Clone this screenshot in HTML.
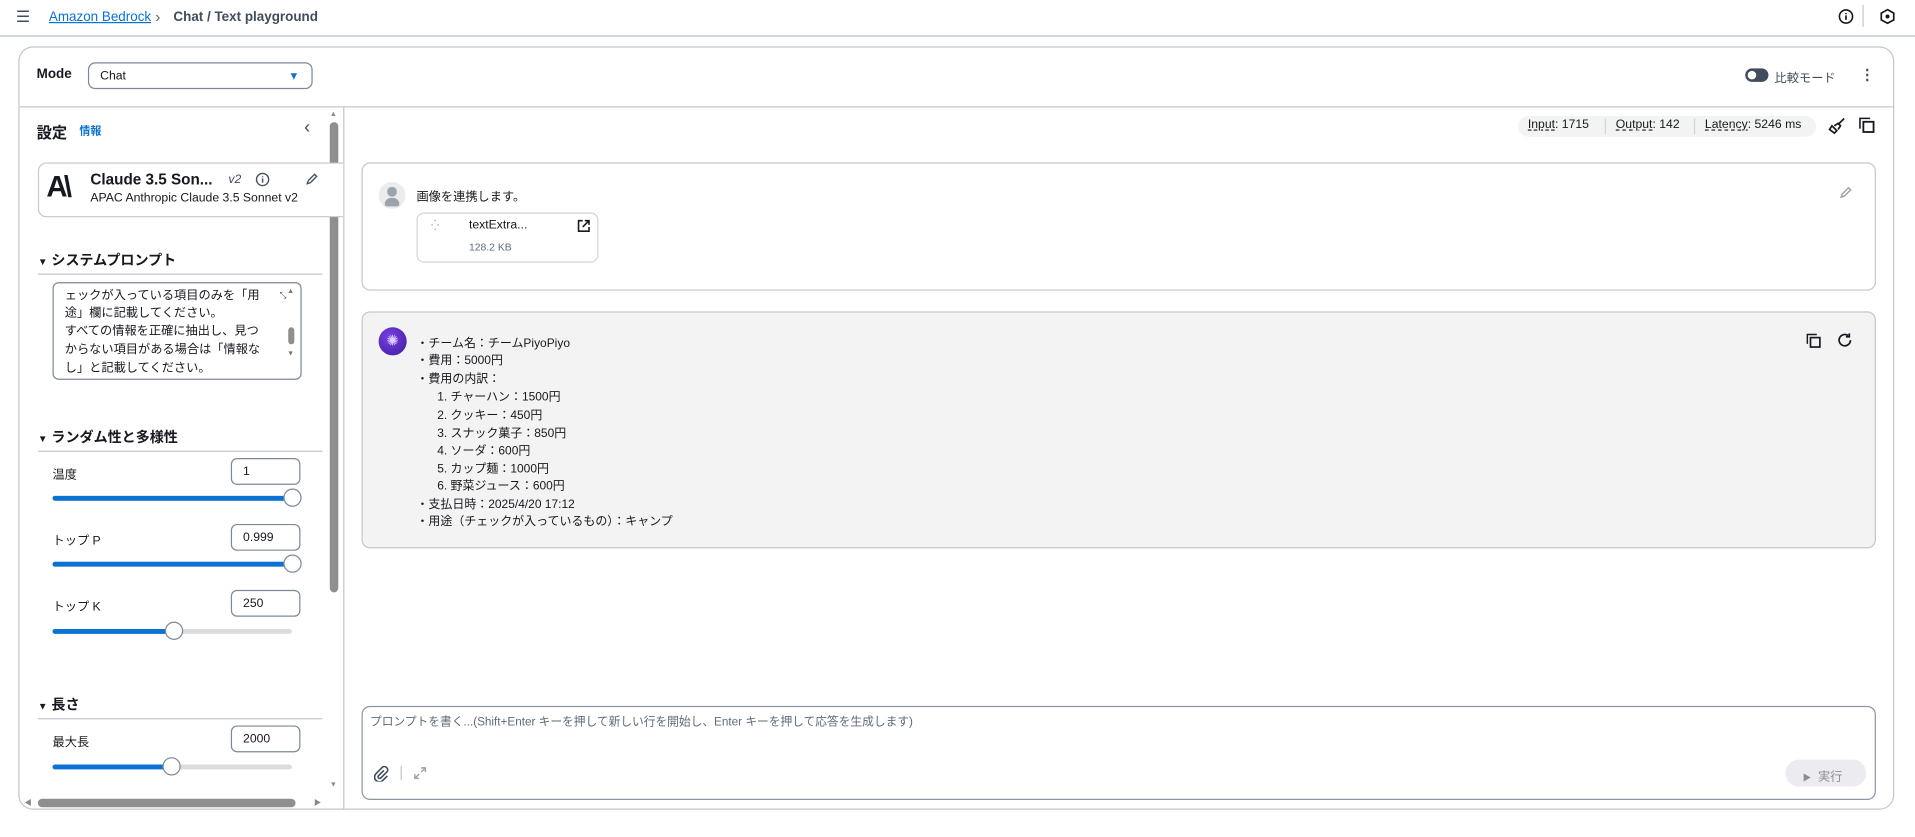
<!DOCTYPE html>
<html><head><meta charset="utf-8"><style>
*{box-sizing:border-box;margin:0;padding:0}
html,body{width:1915px;height:837px;overflow:hidden;background:#fff}
#w{position:absolute;left:0;top:0;width:1568px;height:685px;transform:scale(1.22130);transform-origin:0 0;font-family:"Liberation Sans","Noto Sans CJK JP",sans-serif;color:#16191f;font-size:10px}
.a{position:absolute;white-space:nowrap}
.b{font-weight:bold}
.card{position:absolute;border:1px solid #c6c6cd;border-radius:7px;background:#fff}
.inp{position:absolute;border:1px solid #7d8998;border-radius:5px;height:22px;width:57px;left:189px;padding:5px 9px;font-size:10px}
.tr{position:absolute;left:43px;width:196px;height:4px;border-radius:2px;background:#dcdcdc}
.tr i{position:absolute;left:0;top:0;height:4px;border-radius:2px;background:#0972d3}
.th{position:absolute;width:15px;height:15px;border-radius:50%;border:1px solid #7d8998;background:#fff;top:-6px}
.sh{position:absolute;left:31px;width:233px;border-bottom:1px solid #c6c6cd;font-weight:bold;font-size:11.5px;padding-bottom:3px}
.ln{position:absolute;left:341px;font-size:9.8px}
</style></head><body><div id="w">
<!-- top bar -->
<div class="a" style="left:13px;top:6px;font-size:13px;color:#414d5c">☰</div>
<div class="a" style="left:40px;top:8px;font-size:11px;color:#0972d3;text-decoration:underline">Amazon Bedrock</div>
<div class="a" style="left:127px;top:6px;font-size:13px;color:#5f6b7a">›</div>
<div class="a b" style="left:142px;top:8px;font-size:11px;color:#414d5c">Chat / Text playground</div>
<svg class="a" style="left:1505px;top:7px" width="13" height="13" viewBox="0 0 14 14"><circle cx="7" cy="7" r="5.8" fill="none" stroke="#16191f" stroke-width="1.4"/><path d="M7 6v4M7 4v1" stroke="#16191f" stroke-width="1.5"/></svg>
<div class="a" style="left:1525px;top:4px;width:1px;height:18px;background:#c6c6cd"></div>
<svg class="a" style="left:1539px;top:7px" width="13" height="13" viewBox="0 0 14 14"><path d="M7 1l5.5 3v6L7 13 1.5 10V4z" fill="none" stroke="#16191f" stroke-width="1.5"/><circle cx="7" cy="7" r="1.8" fill="#16191f"/></svg>
<div class="a" style="left:0;top:29px;width:1568px;height:1px;background:#b6bec9"></div>
<!-- main card -->
<div class="card" style="left:15px;top:38px;width:1536px;height:625px;border-radius:12px"></div>
<div class="a b" style="left:30px;top:55px;font-size:11px">Mode</div>
<div class="a" style="left:72px;top:51px;width:184px;height:22px;border:1px solid #7d8998;border-radius:6px;padding:5px 9px;font-size:10px">Chat<span style="position:absolute;right:10px;top:5px;color:#0972d3;font-size:9px">▼</span></div>
<div class="a" style="left:1429px;top:56px;width:19px;height:11px;border-radius:6px;background:#414d5c"><span style="position:absolute;left:2px;top:2px;width:7px;height:7px;border-radius:50%;background:#fff"></span></div>
<div class="a" style="left:1453px;top:55px;font-size:10px;color:#414d5c">比較モード</div>
<div class="a b" style="left:1523px;top:54px;font-size:12px;color:#414d5c">⋮</div>
<div class="a" style="left:16px;top:87px;width:1534px;height:1px;background:#c6c6cd"></div>
<div class="a" style="left:281px;top:88px;width:1px;height:575px;background:#c6c6cd"></div>
<!-- left panel -->
<div class="a b" style="left:30px;top:98px;font-size:12.5px">設定</div>
<div class="a b" style="left:65px;top:100px;font-size:9px;color:#0972d3">情報</div>
<div class="a" style="left:249px;top:96px;font-size:15px;color:#414d5c">‹</div>
<div class="a" style="left:270px;top:91px;font-size:6px;color:#888">▲</div>
<div class="a" style="left:270px;top:100px;width:7px;height:385px;border-radius:4px;background:#8f8f8f"></div>
<div class="a" style="left:270px;top:640px;font-size:6px;color:#888">▼</div>
<div class="card" style="left:31px;top:133px;width:250px;height:45px;border-right:none;border-radius:7px 0 0 7px"></div>
<div class="a b" style="left:38px;top:140px;font-size:24px;letter-spacing:-3px;font-family:'Liberation Sans',sans-serif">A\</div>
<div class="a b" style="left:74px;top:140px;font-size:12.5px">Claude 3.5 Son...</div>
<div class="a" style="left:187px;top:142px;font-size:10px;font-style:italic;color:#414d5c">v2</div>
<svg class="a" style="left:209px;top:141px" width="12" height="12" viewBox="0 0 14 14"><circle cx="7" cy="7" r="5.8" fill="none" stroke="#414d5c" stroke-width="1.3"/><path d="M7 6v4M7 4v1" stroke="#414d5c" stroke-width="1.4"/></svg>
<svg class="a" style="left:249px;top:141px" width="12" height="12" viewBox="0 0 14 14"><path d="M3 11l1-3 6-6 2 2-6 6z" fill="none" stroke="#414d5c" stroke-width="1.3"/></svg>
<div class="a" style="left:74px;top:157px;font-size:10px">APAC Anthropic Claude 3.5 Sonnet v2</div>
<div class="sh" style="top:205px"><span style="font-size:8px">▼</span> システムプロンプト</div>
<div class="a" style="left:43px;top:231px;width:204px;height:80px;border:1px solid #7d8998;border-radius:5px;overflow:hidden;padding:0 0 0 9px;font-size:10px;line-height:14.7px">
<div style="margin-top:-11px">チェックボックスがある場合は、チ<br>ェックが入っている項目のみを「用<br>途」欄に記載してください。<br>すべての情報を正確に抽出し、見つ<br>からない項目がある場合は「情報な<br>し」と記載してください。</div></div>
<div class="a" style="left:235px;top:236px;font-size:6px;color:#777">▲</div>
<div class="a" style="left:229px;top:239px;font-size:7px;color:#555">⤡</div>
<div class="a" style="left:236px;top:268px;width:5px;height:14px;border-radius:3px;background:#8f8f8f"></div>
<div class="a" style="left:235px;top:287px;font-size:6px;color:#777">▼</div>
<div class="sh" style="top:350px"><span style="font-size:8px">▼</span> ランダム性と多様性</div>
<div class="a" style="left:43px;top:380px;font-size:10px">温度</div>
<div class="inp" style="top:375px">1</div>
<div class="tr" style="top:406px"><i style="width:196px"></i><span class="th" style="left:189px"></span></div>
<div class="a" style="left:43px;top:434px;font-size:10px">トップ P</div>
<div class="inp" style="top:429px">0.999</div>
<div class="tr" style="top:460px"><i style="width:196px"></i><span class="th" style="left:189px"></span></div>
<div class="a" style="left:43px;top:488px;font-size:10px">トップ K</div>
<div class="inp" style="top:483px">250</div>
<div class="tr" style="top:515px"><i style="width:99px"></i><span class="th" style="left:92px"></span></div>
<div class="sh" style="top:569px"><span style="font-size:8px">▼</span> 長さ</div>
<div class="a" style="left:43px;top:599px;font-size:10px">最大長</div>
<div class="inp" style="top:594px">2000</div>
<div class="tr" style="top:626px"><i style="width:97px"></i><span class="th" style="left:90px"></span></div>
<div class="a" style="left:20px;top:652px;font-size:6px;color:#888">◀</div>
<div class="a" style="left:31px;top:654px;width:211px;height:7px;border-radius:4px;background:#8f8f8f"></div>
<div class="a" style="left:257px;top:652px;font-size:6px;color:#888">▶</div>
<!-- stats -->
<div class="a" style="left:1243px;top:95px;width:244px;height:17px;border-radius:9px;background:#f2f3f3;font-size:10px">
<span style="position:absolute;left:8px;top:2px"><u style="text-decoration:underline dashed">Input</u>: 1715</span>
<span style="position:absolute;left:71px;top:2px;width:1px;height:13px;background:#d1d5db"></span>
<span style="position:absolute;left:80px;top:2px"><u style="text-decoration:underline dashed">Output</u>: 142</span>
<span style="position:absolute;left:144px;top:2px;width:1px;height:13px;background:#d1d5db"></span>
<span style="position:absolute;left:153px;top:2px"><u style="text-decoration:underline dashed">Latency</u>: 5246 ms</span></div>
<svg class="a" style="left:1497px;top:96px" width="14" height="14" viewBox="0 0 14 14"><path d="M13 1L8 6M3 7l4 4-2 2-4-3z" fill="none" stroke="#16191f" stroke-width="1.4"/><path d="M5 7l3-2 2 2-2 3" fill="none" stroke="#16191f" stroke-width="1.4"/></svg>
<svg class="a" style="left:1522px;top:96px" width="13" height="13" viewBox="0 0 14 14"><path d="M1 10V1h9" fill="none" stroke="#16191f" stroke-width="1.4"/><rect x="4" y="4" width="9" height="9" fill="none" stroke="#16191f" stroke-width="1.6"/></svg>
<!-- user msg -->
<div class="card" style="left:296px;top:133px;width:1240px;height:105px"></div>
<div class="a" style="left:310px;top:149px;width:22px;height:22px;border-radius:50%;background:#ececec"><span style="position:absolute;left:7px;top:4px;width:8px;height:8px;border-radius:50%;background:#9ba3ad"></span><span style="position:absolute;left:5px;top:13px;width:12px;height:7px;border-radius:6px 6px 2px 2px;background:#9ba3ad"></span></div>
<div class="a" style="left:341px;top:152px;font-size:10px">画像を連携します。</div>
<svg class="a" style="left:1505px;top:152px" width="12" height="12" viewBox="0 0 14 14"><path d="M3 11l1-3 6-6 2 2-6 6z" fill="none" stroke="#9ba3ad" stroke-width="1.4"/></svg>
<div class="a" style="left:341px;top:174px;width:149px;height:41px;border:1px solid #d1d5db;border-radius:6px"></div>
<div class="a" style="left:353px;top:180px;font-size:8px;color:#888">⁛</div>
<div class="a" style="left:384px;top:179px;font-size:10px">textExtra...</div>
<div class="a" style="left:384px;top:197px;font-size:8.5px;color:#5f6b7a">128.2 KB</div>
<svg class="a" style="left:472px;top:179px" width="12" height="12" viewBox="0 0 14 14"><path d="M6 2H2v10h10V8M8 2h4v4M12 2L6 8" fill="none" stroke="#16191f" stroke-width="1.5"/></svg>
<!-- assistant msg -->
<div class="card" style="left:296px;top:255px;width:1240px;height:194px;background:#f3f3f3"></div>
<div class="a" style="left:310px;top:268px;width:23px;height:23px;border-radius:50%;background:radial-gradient(circle at 40% 35%,#7b3fe4,#3b1c9a);color:#dcd0ff;font-size:12px;text-align:center;line-height:23px">✺</div>
<div class="ln a" style="top:273px">・チーム名：チームPiyoPiyo</div>
<div class="ln a" style="top:287px">・費用：5000円</div>
<div class="ln a" style="top:302px">・費用の内訳：</div>
<div class="ln a" style="top:317px;left:358px">1. チャーハン：1500円</div>
<div class="ln a" style="top:332px;left:358px">2. クッキー：450円</div>
<div class="ln a" style="top:347px;left:358px">3. スナック菓子：850円</div>
<div class="ln a" style="top:361px;left:358px">4. ソーダ：600円</div>
<div class="ln a" style="top:376px;left:358px">5. カップ麺：1000円</div>
<div class="ln a" style="top:390px;left:358px">6. 野菜ジュース：600円</div>
<div class="ln a" style="top:405px">・支払日時：2025/4/20 17:12</div>
<div class="ln a" style="top:419px">・用途（チェックが入っているもの）：キャンプ</div>
<svg class="a" style="left:1479px;top:273px" width="12" height="12" viewBox="0 0 14 14"><path d="M1 10V1h9" fill="none" stroke="#16191f" stroke-width="1.4"/><rect x="4" y="4" width="9" height="9" fill="none" stroke="#16191f" stroke-width="1.6"/></svg>
<svg class="a" style="left:1504px;top:272px" width="13" height="13" viewBox="0 0 14 14"><path d="M12 7a5 5 0 1 1-2-4M11 1v3H8" fill="none" stroke="#16191f" stroke-width="1.5"/></svg>
<!-- prompt -->
<div class="card" style="left:296px;top:578px;width:1240px;height:77px;border-color:#8c96a3"></div>
<div class="a" style="left:303px;top:583px;font-size:9.6px;color:#5f6b7a">プロンプトを書く...(Shift+Enter キーを押して新しい行を開始し、Enter キーを押して応答を生成します)</div>
<svg class="a" style="left:306px;top:627px" width="13" height="13" viewBox="0 0 14 14"><path d="M9 4l-5 5a1.5 1.5 0 0 0 2 2l6-6a3 3 0 0 0-4-4L2 7a4 4 0 0 0 6 6l4-4" fill="none" stroke="#414d5c" stroke-width="1.4"/></svg>
<div class="a" style="left:328px;top:627px;width:1px;height:12px;background:#c6c6cd"></div>
<svg class="a" style="left:338px;top:627px" width="12" height="12" viewBox="0 0 14 14"><path d="M8 2h4v4M12 2L8 6M6 12H2V8M2 12l4-4" fill="none" stroke="#9ba3ad" stroke-width="1.4"/></svg>
<div class="a" style="left:1462px;top:622px;width:66px;height:22px;border-radius:11px;background:#ebebf0;color:#8c8c94;font-size:10px;padding:5px 0 0 14px"><span style="font-size:7px">▶</span>&nbsp; 実行</div>
</div></body></html>
